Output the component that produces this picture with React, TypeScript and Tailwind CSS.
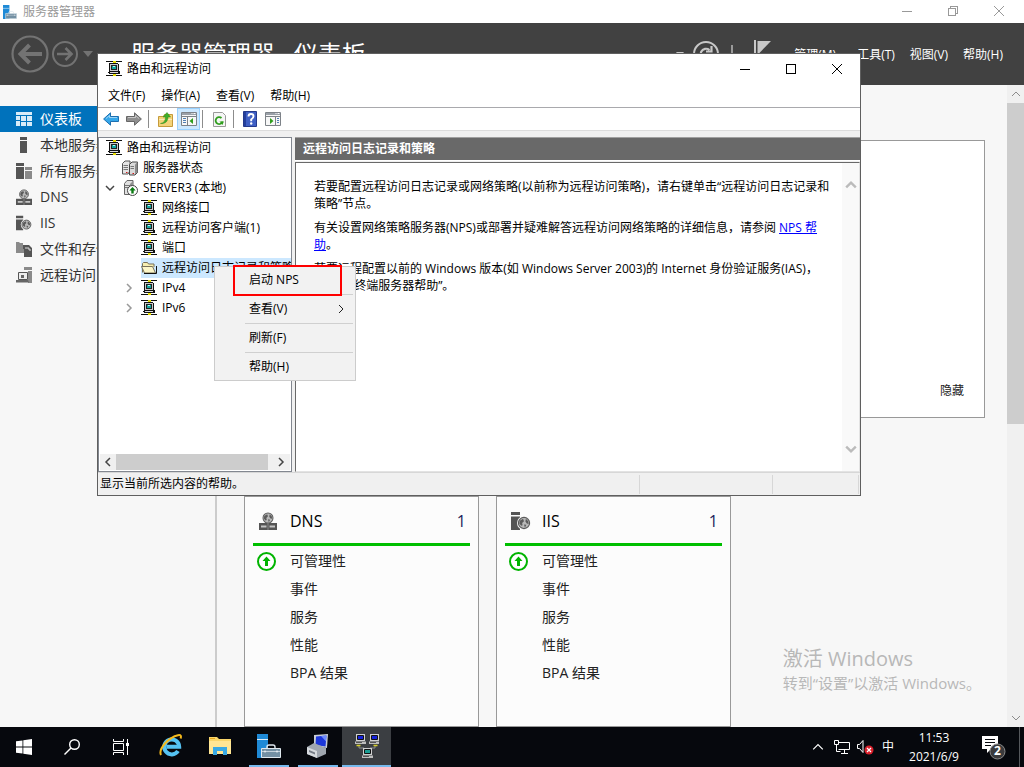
import { clsx } from 'clsx'
import type { ReactNode } from 'react'

type IconProps = { className?: string }

function ServerManagerIcon({ className }: IconProps) {
  return (
    <svg viewBox="0 0 24 24" className={className} aria-hidden="true">
      <path d="M0 0h11v24H0z" fill="#1f8ad6" />
      <path d="M0 5h11v1H0z" fill="#d8ecfa" />
      <path d="M8 11.5V10q0-2 2-2h4q2 0 2 2v1.5" transform="translate(2 3)" fill="none" stroke="#dfe8ee" strokeWidth="1.4" />
      <path d="M4.5 14.5h19v9h-19z" fill="#7390a3" stroke="#dfe8ee" />
      <path d="M5 17.500h18" stroke="#c3d1da" />
      <path d="M8 16.500v2M20 16.500v2" stroke="#fff" />
    </svg>
  )
}

function RoutingIcon({ className }: IconProps) {
  return (
    <svg viewBox="0 0 16 16" className={className} shapeRendering="crispEdges" aria-hidden="true">
      <path d="M0 0h16v1H0zM0 14h16v1H0z" fill="#111" />
      <path d="M7 0h3v2H7zM7 13h3v2H7z" fill="#e6dc00" />
      <path d="M3 2h9v1h1v7h1v3H3v-1H2v-1h1z" fill="#111" />
      <path d="M4 3h8v7H4z" fill="#c9c9c9" />
      <path d="M5 4h6v5H5z" fill="#222" />
      <path d="M6 5h4v3H6z" fill="#12a5a0" />
      <path d="M7 5h2v1H7z" fill="#b9f5f0" />
      <path d="M4 11h8v1H4z" fill="#ddd" />
    </svg>
  )
}

function ServerPairIcon() {
  return (
    <svg viewBox="0 0 16 16" className="size-4" aria-hidden="true">
      <path d="M.5 3.500 3 1h5v10l-2 3H.5z" fill="#e4e4e4" stroke="#555" />
      <path d="M7.500 4.500 10 2h5.500v10.500L13 15H7.500z" fill="#dadada" stroke="#444" />
      <path d="M13 4.500v10l2.500-2.500V2z" fill="#8b8b8b" />
      <path d="M1.500 5.500H6M1.500 7.500H6M1.500 9.500H6M8.500 6.500H12M8.500 8.500H12" stroke="#777" />
      <path d="M4 12h1.500v1H4zM10.500 13H12v1h-1.500z" fill="#d01818" />
    </svg>
  )
}

function ServerUpIcon() {
  return (
    <svg viewBox="0 0 16 16" className="size-4" aria-hidden="true">
      <path d="M2.500 3.500 5 .5h6v11l-3 3H2.500z" fill="#e0e0e0" stroke="#666" />
      <path d="M8 4v9l3-2V1z" fill="#909090" />
      <path d="M3 5.500h5M3 7.500h5" stroke="#777" />
      <circle cx="10.500" cy="10.500" r="5" fill="#fff" stroke="#444" />
      <path d="m10.500 7 3.200 3.500h-2v3H9.300v-3h-2z" fill="#0b7a12" />
    </svg>
  )
}

function FolderIcon() {
  return (
    <svg viewBox="0 0 16 16" className="size-4" aria-hidden="true">
      <path d="M1.500 12.500V3.500l1-1h4l1 1.500h5.500v3" fill="#f6eeb0" stroke="#77705a" />
      <path d="M.5 6.500h11l3 6.500h-11z" fill="#fbf6c8" stroke="#77705a" />
      <path d="M3 13.500h12.500V6" fill="none" stroke="#111" />
    </svg>
  )
}

function GlobeShape({ cx, cy, r }: { cx: number; cy: number; r: number }) {
  return (
    <g transform={`translate(${cx} ${cy}) scale(${r / 6})`}>
      <circle r="6" fill="#b9b9b9" stroke="#5b5b5b" strokeWidth="1.200" />
      <path d="M-4.500-2.500-1-4.500 0-2l-2 2 .5 2.500L-3 3l-2-2.500zM2-4.500 4.500-2 5 1 3 .5 1.500-1.500zM0 1.500l2.500.5L1 5z" fill="#5b5b5b" />
    </g>
  )
}

function DnsIcon({ className }: IconProps) {
  return (
    <svg viewBox="0 0 18 18" className={className} aria-hidden="true">
      <GlobeShape cx={9} cy={6} r={5} />
      <path d="M0 11h18v7H0z" fill="#555" />
      <path d="M2 13.500h5.500v2H2zM10.500 13.500H16v2h-5.500z" fill="#c4c4c4" />
      <path d="M8.500 11h1v7h-1z" fill="#888" />
    </svg>
  )
}

function IisIcon({ className }: IconProps) {
  return (
    <svg viewBox="0 0 20 18" className={className} aria-hidden="true">
      <path d="M0 0h9v3H0zM0 4.500h9V18H0z" fill="#555" />
      <circle cx="13" cy="11" r="7" fill="#f8f8f8" />
      <GlobeShape cx={13} cy={11} r={5.6} />
    </svg>
  )
}

function DashboardIcon() {
  return (
    <svg viewBox="0 0 16 16" className="size-4" aria-hidden="true">
      <path d="M0 1h16v3H0zM0 5h4v4H0zM5 5h5v5H5zM11 5h5v5h-5zM0 10h4v5H0zM5 11h5v4H5zM11 11h5v4h-5z" fill="#d9ecf8" />
    </svg>
  )
}

function LocalServerIcon() {
  return (
    <svg viewBox="0 0 16 16" className="size-4" aria-hidden="true">
      <path d="M4 0h7v3H4zM4 4h7v12H4z" fill="#555" />
    </svg>
  )
}

function AllServersIcon() {
  return (
    <svg viewBox="0 0 16 16" className="size-4" aria-hidden="true">
      <path d="M0 0h8v3H0zM0 4h8v12H0z" fill="#555" />
      <path d="M9 4h7v3H9zM9 8h7v8H9z" fill="#8a8a8a" />
    </svg>
  )
}

function StorageIcon() {
  return (
    <svg viewBox="0 0 16 16" className="size-4" aria-hidden="true">
      <path d="M0 1h3l1 1h3v2H0zM0 4h12v8H0z" fill="#8a8a8a" />
      <path d="M7 4h6l3 3v9H8V8H7z" fill="#555" />
      <path d="M9 7h4v2h2" fill="none" stroke="#ddd" />
    </svg>
  )
}

function RemoteAccessIcon() {
  return (
    <svg viewBox="0 0 16 16" className="size-4" aria-hidden="true">
      <path d="M8 0h8v3H8zM12 4h4v12h-4z" fill="#8a8a8a" />
      <path d="M2.500 5.500h9v7h-9z" fill="#eee" stroke="#555" />
      <path d="M5 11V8h3v3zM0 13h12l1 2.500H0z" fill="#666" />
    </svg>
  )
}

function Chevron({ d, className }: { d: string; className?: string }) {
  return (
    <svg viewBox="0 0 10 10" className={className} fill="none" stroke="currentColor" aria-hidden="true">
      <path d={d} />
    </svg>
  )
}

const UP = 'M1 7l4-4 4 4'
const DOWN = 'M1 3l4 4 4-4'
const LEFT = 'M7 1L3 5l4 4'
const RIGHT = 'M3 1l4 4-4 4'

function WindowButtons({ restore, className }: { restore?: boolean; className?: string }) {
  return (
    <div className={clsx('flex', className)}>
      <button type="button" aria-label="最小化" className="grid w-[46px] place-items-center">
        <svg viewBox="0 0 10 10" className="size-2.5" shapeRendering="crispEdges">
          <path d="M0 5.500h10" stroke="currentColor" />
        </svg>
      </button>
      <button type="button" aria-label={restore ? '还原' : '最大化'} className="grid w-[46px] place-items-center">
        <svg viewBox="0 0 10 10" className="size-2.5" fill="none" stroke="currentColor" shapeRendering="crispEdges">
          {restore ? <path d="M.5 2.500h7v7h-7zM2.500 2.500v-2h7v7h-2" /> : <path d="M.5.5h9v9h-9z" />}
        </svg>
      </button>
      <button type="button" aria-label="关闭" className="grid w-[46px] place-items-center">
        <svg viewBox="0 0 10 10" className="size-2.5" stroke="currentColor">
          <path d="M0 0l10 10M10 0L0 10" />
        </svg>
      </button>
    </div>
  )
}

const NAV_ITEMS: { label: string; icon: ReactNode; active?: boolean }[] = [
  { label: '仪表板', icon: <DashboardIcon />, active: true },
  { label: '本地服务器', icon: <LocalServerIcon /> },
  { label: '所有服务器', icon: <AllServersIcon /> },
  { label: 'DNS', icon: <DnsIcon className="size-4" /> },
  { label: 'IIS', icon: <IisIcon className="size-4" /> },
  { label: '文件和存储服务', icon: <StorageIcon /> },
  { label: '远程访问', icon: <RemoteAccessIcon /> },
]

const ROLE_ROWS = ['可管理性', '事件', '服务', '性能', 'BPA 结果']

function RoleTile({ title, icon }: { title: string; icon: ReactNode }) {
  return (
    <section className="w-[235px] border border-[#999] bg-[#fcfcfc] px-2">
      <header className="flex h-[49px] items-center border-b-[3px] border-[#00bf00] pt-0.5 text-base text-black">
        <span className="flex w-[37px] pl-1.5">{icon}</span>
        <h2 className="flex-1">{title}</h2>
        <span className="pr-1 text-[#1c1c5a]">1</span>
      </header>
      <ul className="pt-px text-sm text-[#222]">
        {ROLE_ROWS.map((row, i) => (
          <li key={row} className="flex h-7 items-center">
            <span className="w-[37px] pl-1">
              {i === 0 && (
                <svg viewBox="0 0 19 19" className="size-[19px]" aria-hidden="true">
                  <circle cx="9.500" cy="9.500" r="8.500" fill="#fff" stroke="#00b400" strokeWidth="2" />
                  <path d="m9.500 4.500 4 4.500H11v5H8V9H5.500z" fill="#00b400" />
                </svg>
              )}
            </span>
            {row}
          </li>
        ))}
      </ul>
    </section>
  )
}

function ServerManagerHeader() {
  return (
    <header className="flex h-[62px] shrink-0 items-center bg-[#414141] text-white">
      <div className="flex items-center gap-[3px] pl-[11px] text-[#737373]">
        <button type="button" aria-label="后退">
          <svg viewBox="0 0 38 38" className="size-[38px]" fill="none" stroke="currentColor">
            <circle cx="19" cy="19" r="17.500" strokeWidth="2.200" />
            <path d="M31 19H10M18.500 10 9.500 19l9 9" strokeWidth="4" />
          </svg>
        </button>
        <button type="button" aria-label="前进">
          <svg viewBox="0 0 26 26" className="size-[26px]" fill="none" stroke="currentColor">
            <circle cx="13" cy="13" r="12" strokeWidth="2" />
            <path d="M5 13h14M13.500 7l6 6-6 6" strokeWidth="2.600" />
          </svg>
        </button>
        <button type="button" aria-label="历史记录" className="pl-0.5">
          <svg viewBox="0 0 10 6" className="h-1.5 w-2.5">
            <path d="M0 0h10L5 6z" fill="currentColor" />
          </svg>
        </button>
      </div>
      <h1 className="flex-1 pl-[38px] text-2xl whitespace-nowrap">服务器管理器 · 仪表板</h1>
      <div className="flex items-center text-[#c8c8c8]">
        <svg viewBox="0 0 8 5" className="mr-[9px] h-[5px] w-2" aria-hidden="true">
          <path d="M0 0h8L4 5z" fill="currentColor" />
        </svg>
        <button type="button" aria-label="刷新">
          <svg viewBox="0 0 26 26" className="size-[26px]" fill="none" stroke="currentColor">
            <circle cx="13" cy="13" r="12" strokeWidth="2" />
            <path d="M18.500 14a5.500 5.500 0 1 1-2-5M18.500 5v5.500H13" strokeWidth="2.200" />
          </svg>
        </button>
        <span className="mx-3 h-[18px] w-0.5 bg-[#9a9a9a]" />
        <button type="button" aria-label="通知" className="px-2">
          <svg viewBox="0 0 18 28" className="h-7 w-[18px]">
            <path d="M1 0h2v28H1z" fill="currentColor" />
            <path d="M4.500 1H18L4.500 15z" fill="currentColor" />
          </svg>
        </button>
      </div>
      <nav className="flex gap-[15px] pt-px pr-[21px] pl-[15px] text-xs whitespace-nowrap">
        <button type="button" className="pr-1.5">管理(M)</button>
        <button type="button">工具(T)</button>
        <button type="button">视图(V)</button>
        <button type="button">帮助(H)</button>
      </nav>
    </header>
  )
}

function ServerManager() {
  return (
    <div className="flex min-h-0 flex-1 flex-col bg-[#f7f7f7]">
      <div className="flex h-[23px] shrink-0 justify-between bg-white text-[#999]">
        <div className="flex items-center gap-1.5 pl-[3px] text-xs">
          <ServerManagerIcon className="size-3.5" />
          服务器管理器
        </div>
        <WindowButtons restore className="pr-0.5 pb-0.5" />
      </div>
      <ServerManagerHeader />
      <div className="flex min-h-0 flex-1">
        <nav className="w-[217px] shrink-0 border-r-2 border-[#ccc] pt-[21px]">
          {NAV_ITEMS.map((item) => (
            <a
              key={item.label}
              href="#"
              className={clsx(
                'flex h-[26px] items-center gap-2 pl-4 text-sm',
                item.active ? 'bg-[#0072bc] text-white' : 'text-[#333]',
              )}
            >
              {item.icon}
              {item.label}
            </a>
          ))}
        </nav>
        <main className="flex flex-1 flex-col overflow-hidden pt-[55px] pr-[22px] pl-[27px]">
          <section className="flex h-[278px] shrink-0 items-end justify-end border border-[#999] bg-white px-5 py-[18px]">
            <button type="button" className="text-xs text-[#222]">隐藏</button>
          </section>
          <div className="mt-[78px] flex flex-1 gap-[17px]">
            <RoleTile title="DNS" icon={<DnsIcon className="size-[18px]" />} />
            <RoleTile title="IIS" icon={<IisIcon className="h-[18px] w-5" />} />
          </div>
        </main>
        <div className="flex w-[17px] shrink-0 flex-col items-center bg-[#f0f0f0] text-[#8c8c8c]">
          <Chevron d={UP} className="my-1 size-2.5 shrink-0" />
          <div className="h-1/2 w-full bg-[#cdcdcd]" />
          <Chevron d={DOWN} className="mt-auto mb-1 size-2.5 shrink-0" />
        </div>
      </div>
    </div>
  )
}

function ToolbarSeparator() {
  return <span className="h-[18px] w-px bg-[#8c8c8c]" />
}

function PaneGlyph({ flip }: { flip?: boolean }) {
  return (
    <svg viewBox="0 0 16 14" className="h-3.5 w-4" aria-hidden="true">
      <path d="M.5.5h15v13H.5z" fill="#f7f7f7" stroke="#7d8288" />
      <path d="M1 1h14v2H1z" fill="#9aa0a8" />
      <path d="M10.500 1.500h1M12.500 1.500h2" stroke="#fff" />
      <path d="M1 4.500h14" stroke="#7d8288" />
      <path d={flip ? 'M10.500 5v8' : 'M6.500 5v8'} stroke="#7d8288" />
      <path d={flip ? 'M12 6.500h2M12 8.500h2M12 10.500h2' : 'M2 6.500h3M2 8.500h3M2 10.500h3'} stroke="#4f7fb5" />
      <path d={flip ? 'M5 6l3.500 3L5 12z' : 'M12 6 8.500 9l3.500 3z'} fill="#2f9e1d" />
    </svg>
  )
}

function ArrowGlyph({ fill, stroke, back }: { fill: string; stroke: string; back?: boolean }) {
  return (
    <svg viewBox="0 0 16 14" className="h-3.5 w-4" aria-hidden="true">
      <path
        d={back ? 'M.6 7 7.500.8v3.700h8v5h-8v3.700z' : 'M15.400 7 8.500.8v3.700h-8v5h8v3.700z'}
        fill={fill}
        stroke={stroke}
      />
      <path d={back ? 'M3 6.500 6.500 3.500v2H14' : 'M2 5.500h7.500v-2L13 6.500'} stroke="#fff" strokeOpacity="0.500" fill="none" />
    </svg>
  )
}

function Toolbar() {
  return (
    <div className="flex h-[23px] shrink-0 items-center border-b border-[#dcdcdc] bg-white pl-[5px]">
      <button type="button" aria-label="后退">
        <ArrowGlyph back fill="#35a7ea" stroke="#1d6fb0" />
      </button>
      <button type="button" aria-label="前进" className="mr-1.5 ml-[7px]">
        <ArrowGlyph fill="#8f8f8f" stroke="#666" />
      </button>
      <ToolbarSeparator />
      <button type="button" aria-label="上一级" className="mr-1 ml-[9px]">
        <svg viewBox="0 0 15 15" className="size-[15px]">
          <path d="M.5 4.500h5l1-2h8v12H.5z" fill="#f3d37a" stroke="#c59a3b" />
          <path d="M1 7.500h13" stroke="#fbe9b4" />
          <path d="M2.500 11.500C6 11 7.500 8.500 7.500 5H5l4-4.500L12.500 5H10c0 4-2.500 7-7.500 6.500z" fill="#3fae2a" stroke="#2c8a1b" strokeWidth="0.500" />
        </svg>
      </button>
      <button
        type="button"
        aria-label="显示/隐藏控制台树"
        className="grid h-[22px] w-[23px] place-items-center border border-[#99d1ff] bg-[#cce8ff]"
      >
        <PaneGlyph />
      </button>
      <span className="w-0.5" />
      <ToolbarSeparator />
      <button type="button" aria-label="刷新" className="mr-[7px] ml-2.5">
        <svg viewBox="0 0 13 15" className="h-[15px] w-[13px]">
          <path d="M.5.5h9l3 3v11H.5z" fill="#f6f6f6" stroke="#9a9a9a" />
          <path d="M9.500 9.500a3.500 3.500 0 1 1-1-3.500" fill="none" stroke="#2f9e1d" strokeWidth="1.800" />
          <path d="M10.800 9.500H6.500L9.500 13z" fill="#2f9e1d" />
        </svg>
      </button>
      <ToolbarSeparator />
      <button type="button" aria-label="帮助" className="mr-2 ml-[9px]">
        <svg viewBox="0 0 14 16" className="h-4 w-3.5">
          <path d="M.5.5h13v15H.5z" fill="#3f5fc4" stroke="#24398c" />
          <path d="M1 1h2v14H1z" fill="#243f9c" />
          <path d="M5.500 5.500Q5.500 3 8 3t2.500 2.300Q10.500 7 8.200 8.500v1.700" fill="none" stroke="#fff" strokeWidth="1.900" />
          <circle cx="8.200" cy="12.500" r="1.200" fill="#fff" />
        </svg>
      </button>
      <button type="button" aria-label="显示/隐藏操作窗格">
        <PaneGlyph flip />
      </button>
    </div>
  )
}

type TreeNode = {
  label: string
  level: 0 | 1 | 2
  icon?: ReactNode
  expand?: 'open' | 'closed'
  selected?: boolean
}

const TREE: TreeNode[] = [
  { label: '路由和远程访问', level: 0 },
  { label: '服务器状态', level: 1, icon: <ServerPairIcon /> },
  { label: 'SERVER3 (本地)', level: 1, icon: <ServerUpIcon />, expand: 'open' },
  { label: '网络接口', level: 2 },
  { label: '远程访问客户端(1)', level: 2 },
  { label: '端口', level: 2 },
  { label: '远程访问日志记录和策略', level: 2, icon: <FolderIcon />, selected: true },
  { label: 'IPv4', level: 2, expand: 'closed' },
  { label: 'IPv6', level: 2, expand: 'closed' },
]

const TREE_INDENT = ['w-1', 'w-[23px]', 'w-[42px]']

function ConsoleTree() {
  return (
    <div className="flex w-[194px] shrink-0 flex-col border border-[#828790] bg-white">
      <ul className="flex-1 overflow-hidden text-xs whitespace-nowrap">
        {TREE.map((node) => (
          <li key={node.label} className="flex h-5 items-center">
            <span className={clsx('flex shrink-0 justify-end pr-[7px]', TREE_INDENT[node.level])}>
              {node.expand === 'open' && <Chevron d={DOWN} className="size-2.5 stroke-[1.5] text-[#444]" />}
              {node.expand === 'closed' && <Chevron d={RIGHT} className="size-2.5 stroke-[1.5] text-[#999]" />}
            </span>
            <span
              className={clsx(
                'flex h-full flex-1 items-center gap-[5px]',
                node.selected && 'bg-[#cce8ff]',
              )}
            >
              {node.icon ?? <RoutingIcon className="size-4 shrink-0" />}
              {node.label}
            </span>
          </li>
        ))}
      </ul>
      <div className="m-px flex h-4 shrink-0 items-center bg-[#f0f0f0] text-[#444]">
        <Chevron d={LEFT} className="mx-[3px] size-2.5 shrink-0 stroke-[1.5]" />
        <div className="mr-2 h-full flex-1 bg-[#cdcdcd]" />
        <Chevron d={RIGHT} className="mr-1 size-2.5 shrink-0 stroke-[1.5]" />
      </div>
    </div>
  )
}

function DetailPane() {
  return (
    <div className="flex min-w-0 flex-1 flex-col">
      <h2 className="mb-px flex h-6 shrink-0 items-center border-y border-[#a0a0a0] border-b-white bg-[#696969] pl-2 text-xs font-bold text-white">
        远程访问日志记录和策略
      </h2>
      <div className="flex flex-1 border-t border-r border-b border-l border-[#696969] border-r-[#e3e3e3] border-b-[#e3e3e3] bg-white">
        <div className="flex-1 space-y-[7px] pt-[15px] pl-[18px] text-xs leading-[17px] whitespace-nowrap">
          <p>
            若要配置远程访问日志记录或网络策略(以前称为远程访问策略)，请右键单击“远程访问日志记录和
            <br />
            策略”节点。
          </p>
          <p>
            有关设置网络策略服务器(NPS)或部署并疑难解答远程访问网络策略的详细信息，请参阅{' '}
            <a href="#" className="text-[#0000ff] underline">
              NPS 帮
              <br />助
            </a>
            。
          </p>
          <p>
            若要远程配置以前的 Windows 版本(如 Windows Server 2003)的 Internet 身份验证服务(IAS)，
            <br />
            请参阅“终端服务器帮助”。
          </p>
        </div>
        <div className="flex w-[17px] shrink-0 flex-col items-center justify-between bg-[#f9f9f9] py-4 text-[#bbb]">
          <Chevron d={UP} className="size-3 stroke-2" />
          <Chevron d={DOWN} className="size-3 stroke-2" />
        </div>
      </div>
    </div>
  )
}

function MenuSeparator() {
  return <div className="my-[3px] mr-0.5 ml-[30px] h-px bg-[#d0d0d0]" />
}

function ContextMenu() {
  return (
    <div className="absolute top-[212px] left-[116px] w-[142px] border border-[#ccc] bg-[#f2f2f2] py-0.5 text-xs">
      <button type="button" className="flex h-[22px] w-full items-center pl-[34px]">启动 NPS</button>
      <MenuSeparator />
      <button type="button" className="flex h-[22px] w-full items-center justify-between pr-[9px] pl-[34px]">
        查看(V)
        <Chevron d={RIGHT} className="size-2.5 text-[#222]" />
      </button>
      <MenuSeparator />
      <button type="button" className="flex h-[22px] w-full items-center pl-[34px]">刷新(F)</button>
      <MenuSeparator />
      <button type="button" className="flex h-[22px] w-full items-center pl-[34px]">帮助(H)</button>
      <div className="pointer-events-none absolute -top-0.5 left-[18px] h-[31px] w-[109px] border-2 border-[#f00]" />
    </div>
  )
}

function RoutingWindow() {
  return (
    <div className="absolute top-[53px] left-[97px] flex h-[443px] w-[764px] flex-col border border-[#5f5f5f] bg-[#f0f0f0] text-black">
      <div className="flex h-[30px] shrink-0 justify-between bg-white">
        <div className="flex items-center gap-[5px] pl-2 text-xs">
          <RoutingIcon className="size-4" />
          路由和远程访问
        </div>
        <WindowButtons />
      </div>
      <div className="flex h-6 shrink-0 items-center gap-4 border-b border-[#a9a9ad] bg-white pl-2.5 text-xs">
        <button type="button">文件(F)</button>
        <button type="button">操作(A)</button>
        <button type="button">查看(V)</button>
        <button type="button">帮助(H)</button>
      </div>
      <Toolbar />
      <div className="flex min-h-0 flex-1 gap-[3px] pt-1.5">
        <ConsoleTree />
        <DetailPane />
      </div>
      <footer className="flex h-[23px] shrink-0 items-center border-t border-[#d7d7d7] pl-0.5 text-xs">
        <span className="flex-1">显示当前所选内容的帮助。</span>
        <span className="h-[19px] w-[133px] border-l border-[#d7d7d7]" />
        <span className="mr-px h-[19px] w-[87px] border-x border-[#d7d7d7]" />
      </footer>
      <ContextMenu />
    </div>
  )
}

function TaskButton({
  label,
  running,
  active,
  children,
}: {
  label: string
  running?: boolean
  active?: boolean
  children: ReactNode
}) {
  return (
    <button
      type="button"
      aria-label={label}
      className={clsx('flex h-full w-[49px] flex-col items-center', active && 'bg-[#3b3e42]')}
    >
      <span className="grid flex-1 place-items-center">{children}</span>
      <span className={clsx('h-0.5', running && 'bg-[#76b9ed]', active ? 'w-full' : 'w-10')} />
    </button>
  )
}

function MiniPc({ x, y, screen }: { x: number; y: number; screen: string }) {
  return (
    <g transform={`translate(${x} ${y})`}>
      <path d="M0 0h9v7H0z" fill="#cfcfcf" />
      <path d="M1.500 1.500h6v4h-6z" fill={screen} stroke="#111" />
      <path d="M-1 7.500h11V10H-1z" fill="#bdbdbd" />
      <path d="M0 8.500h6" stroke="#555" />
    </g>
  )
}

function Taskbar() {
  return (
    <footer className="flex h-10 shrink-0 items-center justify-between bg-[#06080d] text-white">
      <div className="flex h-full">
        <button type="button" aria-label="开始" className="grid w-12 place-items-center">
          <svg viewBox="0 0 16 16" className="size-4" fill="#fff">
            <path d="M0 2.300 6.500 1.400v6.200H0zM7.300 1.300 16 0v7.600H7.300zM0 8.400h6.500v6.200L0 13.700zM7.300 8.400H16V16l-8.700-1.300z" />
          </svg>
        </button>
        <button type="button" aria-label="搜索" className="grid w-12 place-items-center">
          <svg viewBox="0 0 16 16" className="size-4" fill="none" stroke="#fff" strokeWidth="1.400">
            <circle cx="10.500" cy="5.500" r="4.800" />
            <path d="M7 9 .5 15.500" />
          </svg>
        </button>
        <button type="button" aria-label="任务视图" className="grid w-[50px] place-items-center">
          <svg viewBox="0 0 16 16" className="size-4" fill="none" stroke="#fff">
            <path d="M.5 4.500h10v7H.5zM.5 0v2.500h10V0M.5 16v-2.500h10V16M14.500 0v16" />
            <path d="M13 4h3v3h-3z" fill="#fff" stroke="none" />
          </svg>
        </button>
        <TaskButton label="Internet Explorer">
          <svg viewBox="0 0 24 24" className="size-6" fill="none">
            <path d="M19 17a7.500 7.500 0 1 1 1.200-4.300H7.500" stroke="#55c2f2" strokeWidth="4" />
            <path d="M2 21C-1 15 10 3 19 1.200c3-.6 3.500 1 2.500 3.300" stroke="#f4b91d" strokeWidth="2" />
          </svg>
        </TaskButton>
        <TaskButton label="文件资源管理器">
          <svg viewBox="0 0 22 20" className="h-5 w-[22px]">
            <path d="M0 1h8l2 2h12v15H0z" fill="#f9d66b" />
            <path d="M0 5h22v13H0z" fill="#ffe694" />
            <path d="M1 2h5v1H1z" fill="#e6a51d" />
            <path d="M4 11h14v8h-4v-4H8v4H4z" fill="#38a9e4" />
          </svg>
        </TaskButton>
        <TaskButton label="服务器管理器" running>
          <ServerManagerIcon className="size-6" />
        </TaskButton>
        <TaskButton label="远程桌面" running>
          <svg viewBox="0 0 24 24" className="size-6">
            <path d="M8 1 22 0l-1 14-13-2z" fill="#c9ced6" />
            <path d="m10 2.500 10.500-1-1 11-10-1.500z" fill="#1c37d8" />
            <path d="m15 2 5.500-.5-.5 6z" fill="#6d8bff" />
            <path d="m1 13 7-4 12 5v6l-9 4-10-4z" fill="#9fa6af" />
            <path d="m1 13 10 4v7L1 20z" fill="#d6dade" />
            <path d="m3 16 6 2.500v2L3 18z" fill="#767d87" />
          </svg>
        </TaskButton>
        <TaskButton label="路由和远程访问" running active>
          <svg viewBox="0 0 24 24" className="size-6" fill="none">
            <path d="M4 11v3h5v3M20 11v3h-5v3" stroke="#8f8f8f" />
            <path d="M1.500 11.500h4M18.500 11.500h4" stroke="#d7cf2a" strokeWidth="1.500" />
            <MiniPc x={1} y={0} screen="#1320d8" />
            <MiniPc x={15} y={0} screen="#1320d8" />
            <MiniPc x={8} y={14} screen="#1a9d93" />
          </svg>
        </TaskButton>
      </div>
      <div className="flex h-full items-center">
        <button type="button" aria-label="显示隐藏的图标">
          <Chevron d={UP} className="size-3" />
        </button>
        <svg viewBox="0 0 16 14" className="ml-2.5 h-3.5 w-4" fill="none" stroke="#fff" aria-hidden="true">
          <path d="M5 2.500h10.500v7H4.500M7 13.500h7M10.500 10v3M2.500 5v6.500h4" />
          <path d="M.5.5h4v4h-4z" fill="#06080d" />
        </svg>
        <svg viewBox="0 0 17 15" className="ml-[7px] h-[15px] w-[17px]" fill="none" aria-hidden="true">
          <path d="M.5 4.500h2l3.500-4v12l-3.500-4h-2z" stroke="#fff" />
          <circle cx="12" cy="10" r="4.500" fill="#d9202b" />
          <path d="m10 8 4 4M14 8l-4 4" stroke="#fff" strokeWidth="1.200" />
        </svg>
        <span className="ml-2 text-xs">中</span>
        <time className="ml-1 w-[72px] text-center text-xs leading-[19px]">
          11:53
          <br />
          2021/6/9
        </time>
        <button type="button" aria-label="操作中心" className="relative ml-3 h-[25px] w-6">
          <svg viewBox="0 0 24 25" className="h-[25px] w-6">
            <path d="M0 1h16v13H9l-4 4v-4H0z" fill="#fff" />
            <path d="M3 4.500h10M3 7.500h10M3 10.500h6" stroke="#06080d" />
            <circle cx="15.500" cy="16.500" r="7.500" fill="#3b3b3d" stroke="#8a8a8a" />
          </svg>
          <span className="absolute top-2 left-3 text-xs leading-4 font-bold">2</span>
        </button>
        <span className="mr-1 ml-[13px] h-full w-px bg-[#55585c]" />
      </div>
    </footer>
  )
}

export default function App() {
  return (
    <div className="relative flex h-screen flex-col overflow-hidden font-['Open_Sans','Noto_Sans_CJK_SC',sans-serif]">
      <ServerManager />
      <RoutingWindow />
      <div className="pointer-events-none absolute right-[43px] bottom-[72px] whitespace-nowrap text-[#b8b8b8]">
        <p className="text-xl leading-6">激活 Windows</p>
        <p className="text-[15px] leading-6">转到“设置”以激活 Windows。</p>
      </div>
      <Taskbar />
    </div>
  )
}
